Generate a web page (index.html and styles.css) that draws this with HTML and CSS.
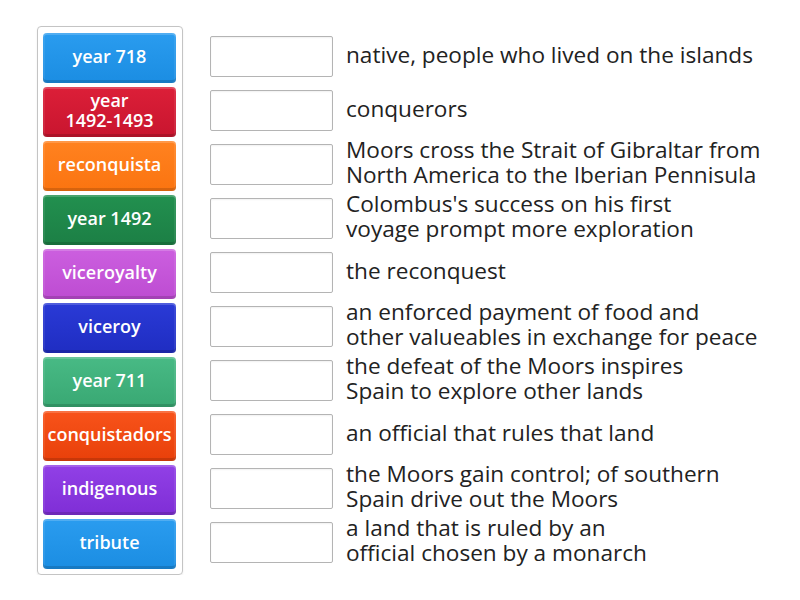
FILE: index.html
```html
<!DOCTYPE html>
<html>
<head>
<meta charset="utf-8">
<link rel="stylesheet" href="styles.css">
</head>
<body>
<div class="game">
  <div class="bank">
    <div class="tile c1">year 718</div>
    <div class="tile c2">year<br>1492-1493</div>
    <div class="tile c3">reconquista</div>
    <div class="tile c4">year 1492</div>
    <div class="tile c5">viceroyalty</div>
    <div class="tile c6">viceroy</div>
    <div class="tile c7">year 711</div>
    <div class="tile c8">conquistadors</div>
    <div class="tile c9">indigenous</div>
    <div class="tile c10">tribute</div>
  </div>
  <div class="rows">
    <div class="row"><div class="slot"></div><div class="def">native, people who lived on the islands</div></div>
    <div class="row"><div class="slot"></div><div class="def">conquerors</div></div>
    <div class="row"><div class="slot"></div><div class="def">Moors cross the Strait of Gibraltar from<br>North America to the Iberian Pennisula</div></div>
    <div class="row"><div class="slot"></div><div class="def">Colombus's success on his first<br>voyage prompt more exploration</div></div>
    <div class="row"><div class="slot"></div><div class="def">the reconquest</div></div>
    <div class="row"><div class="slot"></div><div class="def">an enforced payment of food and<br>other valueables in exchange for peace</div></div>
    <div class="row"><div class="slot"></div><div class="def">the defeat of the Moors inspires<br>Spain to explore other lands</div></div>
    <div class="row"><div class="slot"></div><div class="def">an official that rules that land</div></div>
    <div class="row"><div class="slot"></div><div class="def">the Moors gain control; of southern<br>Spain drive out the Moors</div></div>
    <div class="row"><div class="slot"></div><div class="def">a land that is ruled by an<br>official chosen by a monarch</div></div>
  </div>
</div>
</body>
</html>
```
FILE: styles.css
```css
html, body {
  margin: 0;
  padding: 0;
  background: #fff;
  font-family: "Open Sans", "Liberation Sans", sans-serif;
}
.game {
  display: flex;
  align-items: flex-start;
  padding: 26px 0 0 37px;
}
.bank {
  width: 133px;
  padding: 6px 6px 5px 5px;
  border: 1px solid #c4c4c4;
  border-radius: 4px;
  display: flex;
  flex-direction: column;
  gap: 4px;
  box-shadow: 0 1px 2px rgba(0,0,0,0.08);
}
.tile {
  height: 50px;
  box-sizing: border-box;
  padding-bottom: 5px;
  border-radius: 4px;
  display: flex;
  align-items: center;
  justify-content: center;
  text-align: center;
  color: #fff;
  font-weight: 600;
  font-size: 18px;
  line-height: 20px;
  box-shadow: inset 0 -3px 0 rgba(0,0,0,0.14), inset 0 2px 0 rgba(255,255,255,0.18), inset 2px 0 0 rgba(255,255,255,0.08), inset -2px 0 0 rgba(255,255,255,0.08);
}
.c1, .c10 { background: linear-gradient(#2a9cef, #1b8de2); }
.c2 { background: linear-gradient(#dc1f38, #c8152f); }
.c3 { background: linear-gradient(#ff8220, #fb7410); }
.c4 { background: linear-gradient(#22904f, #1c7f45); }
.c5 { background: linear-gradient(#cc5fdf, #bd4cd2); }
.c6 { background: linear-gradient(#2a3ad6, #1f2dc2); }
.c7 { background: linear-gradient(#48ba85, #39a873); }
.c8 { background: linear-gradient(#f8531a, #e8400a); }
.c9 { background: linear-gradient(#9140e6, #7f2ed6); }
.rows {
  margin-left: 27px;
  margin-top: 5px;
  display: flex;
  flex-direction: column;
  gap: 4px;
}
.row {
  height: 50px;
  display: flex;
  align-items: center;
}
.slot {
  width: 123px;
  height: 41px;
  box-sizing: border-box;
  border: 1px solid #b4b4b4;
  border-radius: 2px;
  background: #fff;
  box-shadow: inset 0 1px 2px rgba(0,0,0,0.06);
  flex: none;
}
.def {
  margin-left: 13px;
  margin-top: -4px;
  font-size: 22.6px;
  line-height: 25px;
  color: #222;
  white-space: nowrap;
}
```
